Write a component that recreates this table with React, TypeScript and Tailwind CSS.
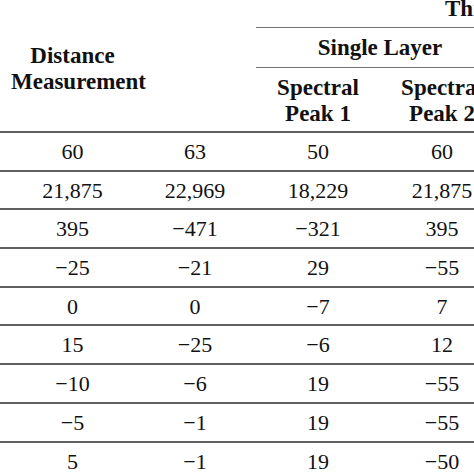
const ROWS: string[][] = [
  ["60", "63", "50", "60"],
  ["21,875", "22,969", "18,229", "21,875"],
  ["395", "\u2212471", "\u2212321", "395"],
  ["\u221225", "\u221221", "29", "\u221255"],
  ["0", "0", "\u22127", "7"],
  ["15", "\u221225", "\u22126", "12"],
  ["\u221210", "\u22126", "19", "\u221255"],
  ["\u22125", "\u22121", "19", "\u221255"],
  ["5", "\u22121", "19", "\u221250"],
];

const ROW_H = ["h-[39px]", "h-[38px]", "h-[39px]", "h-[39px]", "h-[38px]", "h-[39px]", "h-[39px]", "h-[39px]", "h-[39px]"];

const line = "border-b-2 border-[#606060]";

export default function App() {
  return (
    <div className="w-[474px] h-[474px] overflow-hidden bg-white text-[#111] font-['Liberation_Serif',serif]">
      <table className="table-fixed border-separate border-spacing-0 w-[504px]">
        <colgroup>
          <col className="w-[11px]" />
          <col className="w-[123px]" />
          <col className="w-[122px]" />
          <col className="w-[124px]" />
          <col className="w-[124px]" />
        </colgroup>
        <thead className="font-bold text-[23px] leading-[26px]">
          <tr className="h-[28px]">
            <th rowSpan={3} className={line}></th>
            <th rowSpan={3} className={`${line} text-center align-middle pt-[6px]`}>
              Distance
              <br />
              Measurement
            </th>
            <th rowSpan={3} className={line}></th>
            <th colSpan={2} className="border-b-[1.5px] border-[#707070] text-left align-top whitespace-nowrap pl-[189px] leading-[17px]">
              Thickness Measurement
            </th>
          </tr>
          <tr className="h-[40px]">
            <th colSpan={2} className="border-b-[1.5px] border-[#707070] text-center align-middle">
              Single Layer
            </th>
          </tr>
          <tr className="h-[65px]">
            <th className={`${line} text-center align-middle pt-[2px]`}>
              Spectral
              <br />
              Peak 1
            </th>
            <th className={`${line} text-center align-middle whitespace-nowrap pt-[2px]`}>
              Spectral
              <br />
              Peak 2
            </th>
          </tr>
        </thead>
        <tbody className="text-[22px]">
          {ROWS.map((r, i) => (
            <tr key={i} className={ROW_H[i]}>
              <td className={line}></td>
              {r.map((v, j) => (
                <td key={j} className={`${line} text-center align-middle whitespace-nowrap`}>
                  {v}
                </td>
              ))}
            </tr>
          ))}
        </tbody>
      </table>
    </div>
  );
}
